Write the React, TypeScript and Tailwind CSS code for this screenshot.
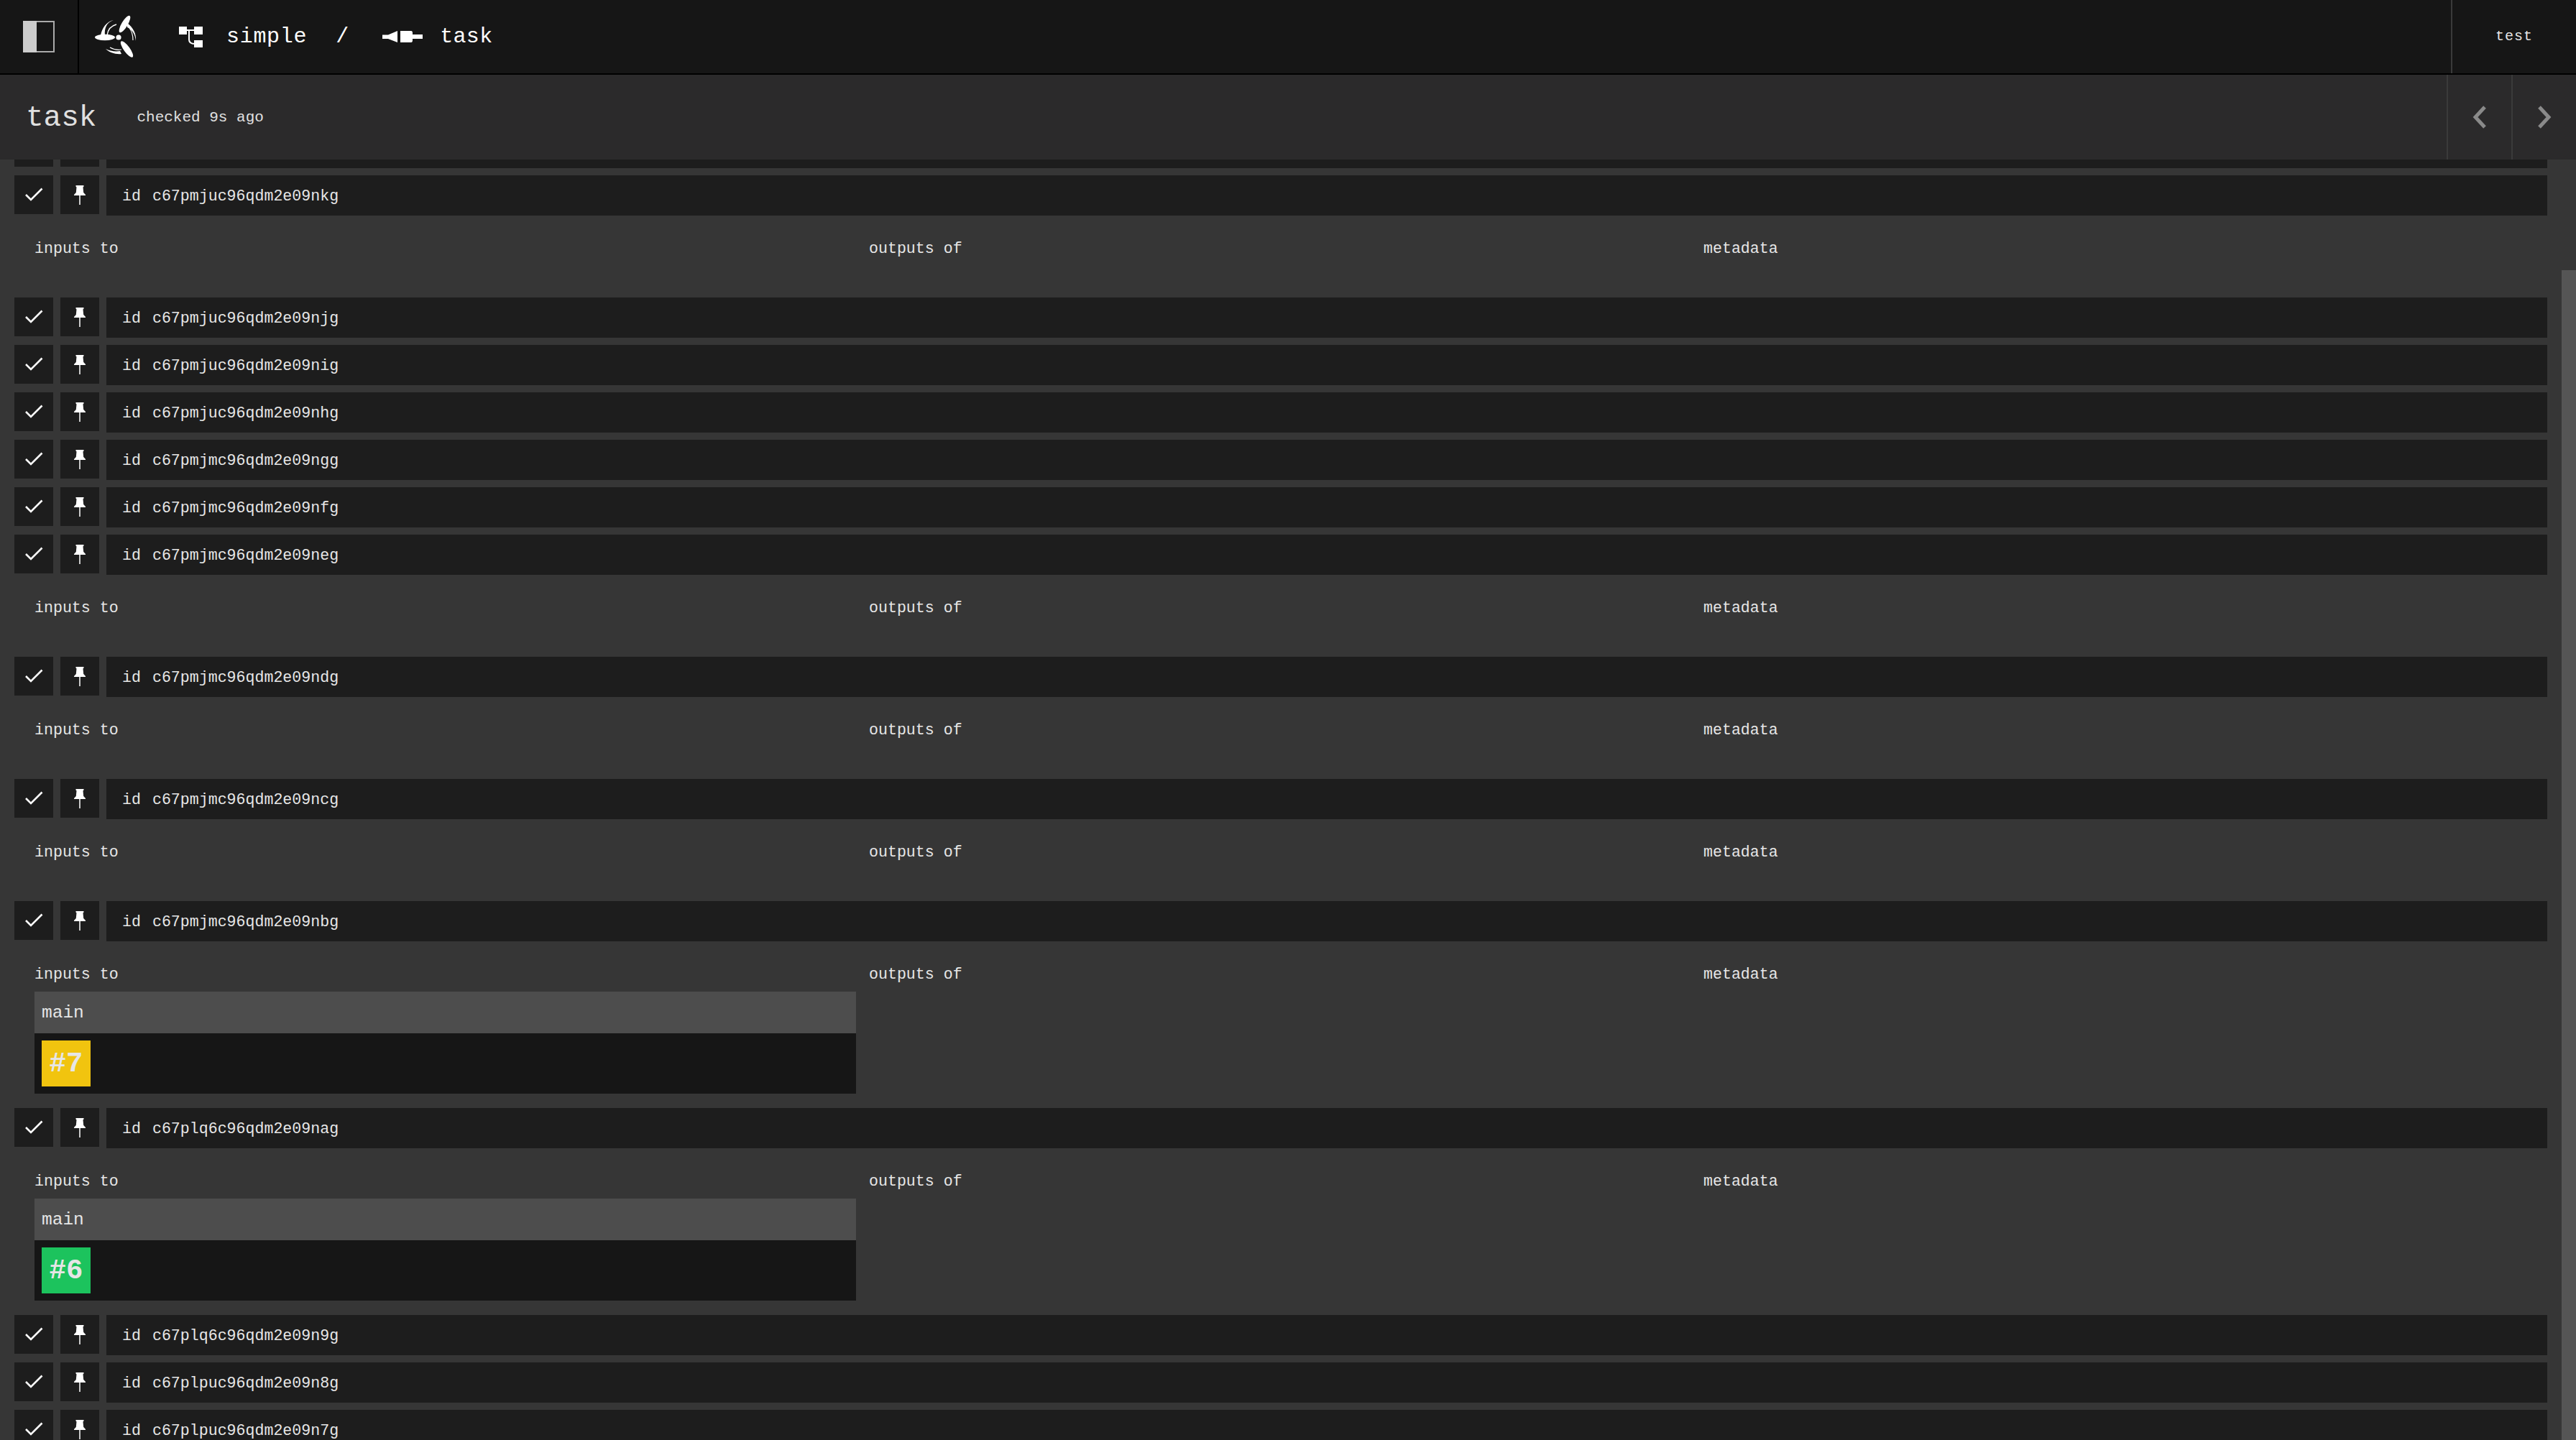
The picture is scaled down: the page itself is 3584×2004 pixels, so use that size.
import React from "react";

type Item = { id: string; section?: boolean; main?: { label: string; color: "yellow" | "green" } };

const items: Item[] = [
  { id: "" },
  { id: "c67pmjuc96qdm2e09nkg", section: true },
  { id: "c67pmjuc96qdm2e09njg" },
  { id: "c67pmjuc96qdm2e09nig" },
  { id: "c67pmjuc96qdm2e09nhg" },
  { id: "c67pmjmc96qdm2e09ngg" },
  { id: "c67pmjmc96qdm2e09nfg" },
  { id: "c67pmjmc96qdm2e09neg", section: true },
  { id: "c67pmjmc96qdm2e09ndg", section: true },
  { id: "c67pmjmc96qdm2e09ncg", section: true },
  { id: "c67pmjmc96qdm2e09nbg", section: true, main: { label: "#7", color: "yellow" } },
  { id: "c67plq6c96qdm2e09nag", section: true, main: { label: "#6", color: "green" } },
  { id: "c67plq6c96qdm2e09n9g" },
  { id: "c67plpuc96qdm2e09n8g" },
  { id: "c67plpuc96qdm2e09n7g" },
];

function Check() {
  return (
    <svg width="26" height="20" viewBox="0 0 26 20" fill="none">
      <path d="M2 10 L9 17 L24.5 1.5" stroke="#ffffff" strokeWidth="2.6" />
    </svg>
  );
}

function Pin() {
  return (
    <svg width="18" height="28" viewBox="0 0 18 28" className="mt-[1px]">
      <path d="M3.5 0 H14.5 V1.5 L13.5 2.5 L14.2 10 L17 13 V14 H1 V13 L3.8 10 L4.5 2.5 L3.5 1.5 Z" fill="#ffffff" />
      <rect x="8" y="14" width="2" height="13" fill="#c8c8c8" />
    </svg>
  );
}

function Logo() {
  return (
    <svg width="64" height="64" viewBox="0 0 64 64" className="ml-[20px] shrink-0" fill="none">
      <circle cx="35" cy="33" r="3.6" fill="#fff" />
      <ellipse cx="16" cy="33" rx="14" ry="4.2" fill="#fff" />
      <ellipse cx="43.5" cy="14.5" rx="13.5" ry="4.2" transform="rotate(-59 43.5 14.5)" fill="#fff" />
      <ellipse cx="46.5" cy="49.5" rx="13.5" ry="4.2" transform="rotate(54 46.5 49.5)" fill="#fff" />
      <path d="M10 30 C12 20 18 11 28 9 C18 12 15 21 16 30 Z" fill="#fff" />
      <path d="M19 30 C20 23 24 17 32 15" stroke="#fff" strokeWidth="1.4" />
      <path d="M47 13 C55 19 60 28 59 38 C58 29 54 22 47 19 Z" fill="#fff" />
      <path d="M50 20 C54 25 55 31 55 37" stroke="#fff" strokeWidth="1.2" />
      <path d="M39 56 C31 57 22 54 17 49 C23 52 30 53 37 52 Z" fill="#fff" />
      <path d="M39 50 C33 51 28 50 23 47" stroke="#fff" strokeWidth="1.2" />
    </svg>
  );
}

function Row({ item }: { item: Item }) {
  return (
    <div>
      <div className={item.section ? "flex gap-[10px] pl-[20px] pr-[40px]" : "flex gap-[10px] pl-[20px] pr-[40px] mb-[10px]"}>
        <div className="flex h-[54px] w-[54px] shrink-0 items-center justify-center bg-[#1d1d1d]">
          <Check />
        </div>
        <div className="flex h-[54px] w-[54px] shrink-0 items-center justify-center bg-[#1d1d1d]">
          <Pin />
        </div>
        <div className="flex h-[56px] flex-1 items-center bg-[#1d1d1d] pl-[22px] pt-[2px] text-[21.6px] text-[#e6e6e6]">
          {item.id && (
            <>
              <span>id</span>
              <span className="ml-[16px]">{item.id}</span>
            </>
          )}
        </div>
      </div>
      {item.section && (
        <div className={item.main ? "ml-[48px] mr-[71px] grid grid-cols-3 gap-x-[18px] pt-[33px] pb-[20px] text-[21.6px] text-[#e6e6e6]" : "ml-[48px] mr-[71px] grid grid-cols-3 gap-x-[18px] pt-[33px] pb-[55px] text-[21.6px] text-[#e6e6e6]"}>
          <div>
            <div className="h-[26px] leading-[26px]">inputs to</div>
            {item.main && (
              <div className="mt-[11px]">
                <div className="flex h-[58px] items-center bg-[#4d4d4d] pl-[10px] pt-[2px] text-[24.5px]">main</div>
                <div className="h-[84px] bg-[#161616] p-[10px]">
                  <div className={item.main.color === "yellow" ? "flex h-[64px] w-[68px] items-center justify-center bg-[#f1c40f] pt-[2px] text-[39px] font-bold" : "flex h-[64px] w-[68px] items-center justify-center bg-[#1cc35d] pt-[2px] text-[39px] font-bold"}>
                    {item.main.label}
                  </div>
                </div>
              </div>
            )}
          </div>
          <div className="h-[26px] leading-[26px]">outputs of</div>
          <div className="h-[26px] leading-[26px]">metadata</div>
        </div>
      )}
    </div>
  );
}

export default function App() {
  return (
    <div className="flex h-[2004px] w-[3584px] flex-col overflow-hidden bg-[#363636] font-['Liberation_Mono',monospace] text-[#e6e6e6]">
      <nav className="flex h-[104px] shrink-0 items-center border-b-2 border-black bg-[#161616] text-white">
        <div className="flex h-full w-[110px] shrink-0 items-center border-r-2 border-black pl-[32px]">
          <div className="flex h-[44px] w-[44px]">
            <div className="h-full w-[19px] bg-[#cccccc]" />
            <div className="h-full flex-1 border-y-2 border-r-2 border-[#aaaaaa]" />
          </div>
        </div>
        <Logo />
        <svg width="33" height="29" viewBox="0 0 33 29" className="ml-[55px] shrink-0" fill="none">
          <rect x="0" y="0" width="11" height="11" fill="#fff" />
          <rect x="21" y="0" width="12" height="11" fill="#fff" />
          <rect x="21" y="19" width="12" height="10" fill="#fff" />
          <path d="M10 5 H22 M14 5 V18 C14 22 16 24 22 24" stroke="#fff" strokeWidth="2" />
        </svg>
        <span className="ml-[33px] text-[30px] leading-none tracking-[0.7px]">simple</span>
        <span className="ml-[40px] text-[30px] leading-none">/</span>
        <svg width="56" height="16" viewBox="0 0 56 16" className="ml-[47px] shrink-0" fill="#fff">
          <path d="M0 5.5 H8 L21 0 V16 L8 11 H0 Z" />
          <path d="M25 0 H40 Q42 0 42 3 V5 H56 V11 H42 V13 Q42 16 40 16 H25 Z" />
        </svg>
        <span className="ml-[24px] text-[30px] leading-none tracking-[0.3px]">task</span>
        <div className="ml-auto flex h-full w-[174px] items-center justify-center border-l-2 border-[#3a3a3a] text-[20px] tracking-[1px] text-[#e6e6e6]">
          test
        </div>
      </nav>
      <header className="flex h-[118px] shrink-0 items-center bg-[#2b2a2b]">
        <h1 className="ml-[36px] mt-[2px] text-[41px] leading-none text-[#e0e0e0]">task</h1>
        <span className="ml-[56px] text-[21px] leading-none text-[#e0e0e0]">checked 9s ago</span>
        <div className="ml-auto flex h-full">
          <div className="flex w-[90px] items-center justify-center border-l-2 border-[#3a3a3a]">
            <svg width="20" height="32" viewBox="0 0 20 32" fill="none">
              <path d="M17 2 L4 16 L17 30" stroke="#8a8a8a" strokeWidth="5" />
            </svg>
          </div>
          <div className="flex w-[90px] items-center justify-center border-l-2 border-[#3a3a3a]">
            <svg width="20" height="32" viewBox="0 0 20 32" fill="none">
              <path d="M3 2 L16 16 L3 30" stroke="#8a8a8a" strokeWidth="5" />
            </svg>
          </div>
        </div>
      </header>
      <main className="relative min-h-0 flex-1 overflow-hidden">
        <div className="-mt-[44px]">
          {items.map((item, i) => (
            <Row key={i} item={item} />
          ))}
        </div>
        <div className="absolute bottom-0 right-0 top-[154px] w-[20px] bg-[#555555]" />
      </main>
    </div>
  );
}
